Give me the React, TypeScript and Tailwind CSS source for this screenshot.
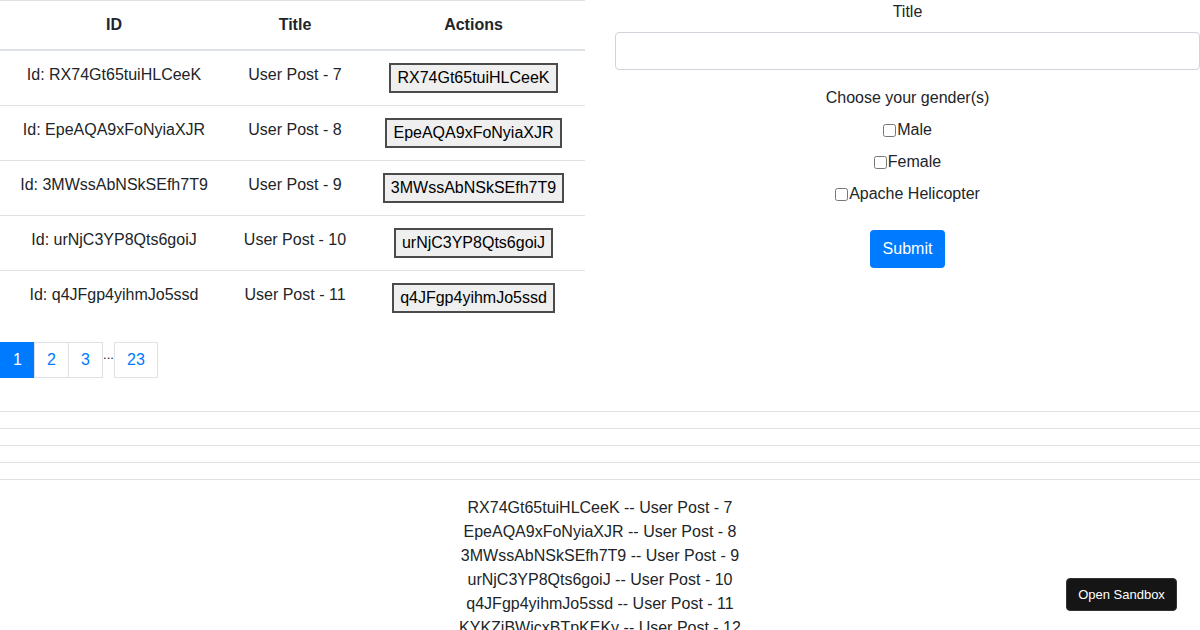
const posts = [
  { id: "RX74Gt65tuiHLCeeK", title: "User Post - 7" },
  { id: "EpeAQA9xFoNyiaXJR", title: "User Post - 8" },
  { id: "3MWssAbNSkSEfh7T9", title: "User Post - 9" },
  { id: "urNjC3YP8Qts6goiJ", title: "User Post - 10" },
  { id: "q4JFgp4yihmJo5ssd", title: "User Post - 11" },
];

const allPosts = [
  ...posts,
  { id: "KYKZjBWicxBTpKEKy", title: "User Post - 12" },
  { id: "Lm3PqR8sTuVw2XyZa", title: "User Post - 13" },
  { id: "bC4dEf5GhIj6KlMn7", title: "User Post - 14" },
];

export default function App() {
  return (
    <div className="min-h-[630px] bg-white text-[16px] leading-6 text-[#212529] font-['Liberation_Sans',Arial,sans-serif]">
      <div className="grid grid-cols-2 gap-[30px]">
        {/* left: table + pagination */}
        <div>
          <table className="w-full table-fixed border-collapse text-center">
            <colgroup>
              <col className="w-[228px]" />
              <col className="w-[134px]" />
              <col />
            </colgroup>
            <thead>
              <tr>
                <th className="border-t border-b-2 border-[#dee2e6] p-3 font-bold align-bottom">ID</th>
                <th className="border-t border-b-2 border-[#dee2e6] p-3 font-bold align-bottom">Title</th>
                <th className="border-t border-b-2 border-[#dee2e6] p-3 font-bold align-bottom">Actions</th>
              </tr>
            </thead>
            <tbody>
              {posts.map((p, i) => (
                <tr key={p.id}>
                  <td className={`p-3 align-top whitespace-nowrap ${i > 0 ? "border-t border-[#dee2e6]" : ""}`}>Id: {p.id}</td>
                  <td className={`p-3 align-top whitespace-nowrap ${i > 0 ? "border-t border-[#dee2e6]" : ""}`}>{p.title}</td>
                  <td className={`p-3 align-top ${i > 0 ? "border-t border-[#dee2e6]" : ""}`}>
                    <button className="border-2 border-[#4b4b4b] bg-[#efefef] px-1.5 py-px leading-6 text-black">{p.id}</button>
                  </td>
                </tr>
              ))}
            </tbody>
          </table>

          <ul className="mt-[17px] flex items-start">
            <li className="flex h-9 w-[35px] items-center justify-center border border-[#007bff] bg-[#007bff] text-white">1</li>
            <li className="-ml-px flex h-9 w-[35px] items-center justify-center border border-[#dee2e6] text-[#007bff]">2</li>
            <li className="-ml-px flex h-9 w-[35px] items-center justify-center border border-[#dee2e6] text-[#007bff]">3</li>
            <li className="w-[11px] pt-[3px] text-center text-[13px] leading-5">...</li>
            <li className="flex h-9 w-[44px] items-center justify-center border border-[#dee2e6] text-[#007bff]">23</li>
          </ul>
        </div>

        {/* right: form */}
        <form className="text-center">
          <label className="block">Title</label>
          <input className="mt-2 block h-[38px] w-full rounded border border-[#ced4da] px-3" />
          <p className="mt-4">Choose your gender(s)</p>
          <div className="mt-2 flex items-center justify-center">
            <input type="checkbox" className="mr-px h-[13px] w-[13px]" />
            <span>Male</span>
          </div>
          <div className="mt-2 flex items-center justify-center">
            <input type="checkbox" className="mr-px h-[13px] w-[13px]" />
            <span>Female</span>
          </div>
          <div className="mt-2 flex items-center justify-center">
            <input type="checkbox" className="mr-px h-[13px] w-[13px]" />
            <span>Apache Helicopter</span>
          </div>
          <button type="button" className="mt-6 rounded bg-[#007bff] px-[13px] py-[7px] text-white">Submit</button>
        </form>
      </div>

      {/* empty rows */}
      <div className="mt-[33px]">
        <div className="h-[17px] border-t border-[#dee2e6]" />
        <div className="h-[17px] border-t border-[#dee2e6]" />
        <div className="h-[17px] border-t border-[#dee2e6]" />
        <div className="h-[17px] border-t border-[#dee2e6]" />
        <div className="h-[17px] border-t border-[#dee2e6]" />
      </div>

      <div className="text-center">
        {allPosts.map((p) => (
          <div key={p.id}>
            {p.id} -- {p.title}
          </div>
        ))}
      </div>

      <button className="fixed bottom-[19px] right-[23px] h-[33px] w-[111px] rounded border border-[#333] bg-[#151515] text-[13px] text-white">
        Open Sandbox
      </button>
    </div>
  );
}
